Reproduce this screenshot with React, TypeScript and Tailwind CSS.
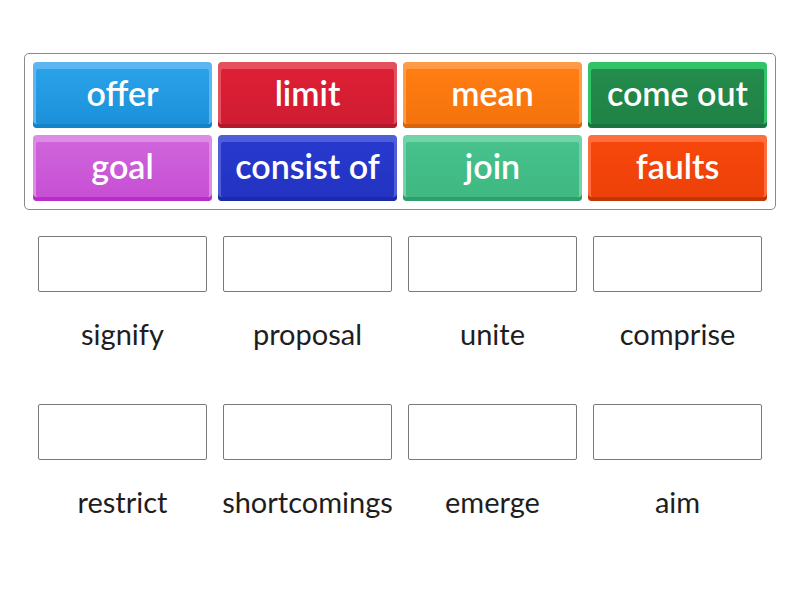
import React from "react";

type Tile = { label: string; outer: string; inner: string };

const tiles: Tile[] = [
  { label: "offer", outer: "bg-[#5db6ef] shadow-[inset_0_-4px_0_#1583c9]", inner: "bg-gradient-to-b from-[#29a2ea] to-[#1c91d9]" },
  { label: "limit", outer: "bg-[#e5505f] shadow-[inset_0_-4px_0_#b3182b]", inner: "bg-gradient-to-b from-[#de1f35] to-[#cf1c31]" },
  { label: "mean", outer: "bg-[#ff9a45] shadow-[inset_0_-4px_0_#d9650a]", inner: "bg-gradient-to-b from-[#ff7d12] to-[#f5730c]" },
  { label: "come out", outer: "bg-[#30c467] shadow-[inset_0_-4px_0_#1a7440]", inner: "bg-gradient-to-b from-[#248c4c] to-[#1f8246]" },
  { label: "goal", outer: "bg-[#dc8ce5] shadow-[inset_0_-4px_0_#bb2dc8]", inner: "bg-gradient-to-b from-[#cf64db] to-[#c74fd4]" },
  { label: "consist of", outer: "bg-[#4e5ed8] shadow-[inset_0_-4px_0_#1b2ba8]", inner: "bg-gradient-to-b from-[#2739cd] to-[#2333c2]" },
  { label: "join", outer: "bg-[#72d2a8] shadow-[inset_0_-4px_0_#2f9e6c]", inner: "bg-gradient-to-b from-[#47c28c] to-[#3fb882]" },
  { label: "faults", outer: "bg-[#ff6c3d] shadow-[inset_0_-4px_0_#c23707]", inner: "bg-gradient-to-b from-[#f7470b] to-[#ec4109]" },
];

const row1 = ["signify", "proposal", "unite", "comprise"];
const row2 = ["restrict", "shortcomings", "emerge", "aim"];

function Targets({ labels }: { labels: string[] }) {
  return (
    <div className="grid grid-cols-4 w-[740px]">
      {labels.map((l) => (
        <div key={l} className="flex flex-col items-center">
          <div className="w-[169px] h-[56px] border border-[#7a7a7a] rounded-[2px] bg-white" />
          <div className="mt-[26px] h-[32px] leading-[32px] text-[29px] text-[#1e1e1e] whitespace-nowrap">{l}</div>
        </div>
      ))}
    </div>
  );
}

export default function App() {
  return (
    <div
      className="w-[800px] h-[600px] bg-white flex flex-col items-center"
      style={{ fontFamily: "Lato, 'Noto Sans', sans-serif" }}
    >
      <div className="mt-[53px] w-[752px] border border-[#8a8a8a] rounded-[5px] p-[8px]">
        <div className="grid grid-cols-4 gap-x-[6px] gap-y-[7px]">
          {tiles.map((t) => (
            <div key={t.label} className={`h-[66px] rounded-[4px] pt-[7px] px-[3px] pb-[4px] flex ${t.outer}`}>
              <div className={`flex-1 flex items-center justify-center rounded-[2px] ${t.inner}`}>
                <span className="text-white text-[34px] font-semibold leading-none -mt-[8px] whitespace-nowrap">{t.label}</span>
              </div>
            </div>
          ))}
        </div>
      </div>
      <div className="mt-[26px]">
        <Targets labels={row1} />
      </div>
      <div className="mt-[54px]">
        <Targets labels={row2} />
      </div>
    </div>
  );
}
